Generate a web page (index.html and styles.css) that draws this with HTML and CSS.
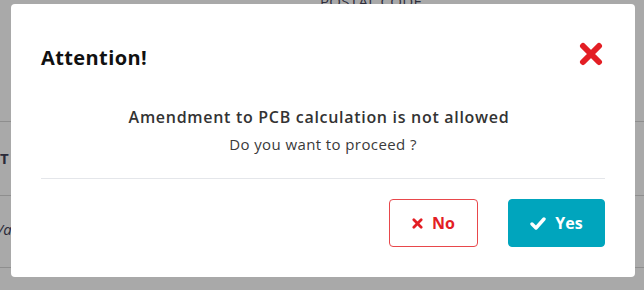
FILE: index.html
```html
<!DOCTYPE html>
<html>
<head>
<meta charset="utf-8">
<link rel="stylesheet" href="styles.css">
</head>
<body>
<div class="page">
  <div class="table">
    <div class="row head"><span class="postal">POSTAL CODE</span></div>
    <div class="row r2"><span class="cell-t">T</span></div>
    <div class="row r3"><span class="cell-a">/a</span></div>
  </div>
</div>
<div class="overlay">
  <div class="modal">
    <div class="modal-head">
      <h2 class="title">Attention!</h2>
      <svg class="close" width="24" height="24" viewBox="0 0 24 24"><path d="M4 4 L20 20 M20 4 L4 20" stroke="#e31e24" stroke-width="6" stroke-linecap="round"/></svg>
    </div>
    <div class="modal-body">
      <p class="msg">Amendment to PCB calculation is not allowed</p>
      <p class="sub">Do you want to proceed ?</p>
    </div>
    <div class="modal-foot">
      <button class="btn btn-no"><svg width="11" height="11" viewBox="0 0 12 12"><path d="M2 2 L10 10 M10 2 L2 10" stroke="#e31e24" stroke-width="3" stroke-linecap="round"/></svg>No</button>
      <button class="btn btn-yes"><svg width="16" height="13" viewBox="0 0 16 13"><path d="M2 7 L6 11 L14 2" fill="none" stroke="#fff" stroke-width="3.4" stroke-linecap="round" stroke-linejoin="round"/></svg>Yes</button>
    </div>
  </div>
</div>
</body>
</html>
```
FILE: styles.css
```css
html, body {
  margin: 0;
  padding: 0;
}
body {
  width: 644px;
  height: 290px;
  overflow: hidden;
  background: #a9a9a9;
  font-family: "Open Sans", "Liberation Sans", sans-serif;
  position: relative;
}
.page {
  height: 290px;
}
.table {
  display: flex;
  flex-direction: column;
  color: #2b2b3a;
}
.row {
  border-bottom: 1px solid #8e8e8e;
  display: flex;
  align-items: center;
}
.head {
  height: 121px;
  align-items: flex-start;
  padding-left: 320px;
}
.postal {
  margin-top: -9px;
  font-size: 15px;
  color: #2e2e3c;
  letter-spacing: 0.3px;
}
.r2 {
  height: 73px;
  font-weight: bold;
  font-size: 15px;
}
.r3 {
  height: 71px;
  font-style: italic;
  font-size: 15px;
}
.cell-t { margin-top: -2px; }
.cell-a { margin-left: -2px; margin-top: -6px; }
.overlay {
  position: absolute;
  left: 11px;
  top: 4px;
}
.modal {
  width: 624px;
  height: 273px;
  background: #fff;
  border-radius: 4px;
  box-sizing: border-box;
  padding: 0 30px;
  display: flex;
  flex-direction: column;
}
.modal-head {
  display: flex;
  justify-content: space-between;
  align-items: center;
  box-sizing: border-box;
  height: 82px;
  padding-top: 31px;
}
.title {
  margin: 0;
  font-size: 20px;
  font-weight: 700;
  color: #111;
  margin-top: -6px;
  letter-spacing: 0.4px;
}
.close {
  margin-right: 2px;
  margin-top: -14px;
}
.modal-body {
  text-align: center;
  color: #333;
  border-bottom: 1px solid #e4e6ea;
  padding-bottom: 24px;
}
.msg {
  margin: 0 8px 0 0;
  font-size: 16px;
  font-weight: 600;
  line-height: 20px;
  margin-top: 21px;
  letter-spacing: 0.7px;
}
.sub {
  margin: 7px 0 0;
  font-size: 15px;
  line-height: 20px;
  color: #3a3a3a;
  letter-spacing: 0.4px;
}
.modal-foot {
  display: flex;
  justify-content: flex-end;
  gap: 30px;
  padding-top: 20px;
}
.btn {
  height: 48px;
  border-radius: 4px;
  font-family: inherit;
  font-size: 16px;
  font-weight: 700;
  display: flex;
  align-items: center;
  justify-content: center;
  gap: 9px;
  box-sizing: border-box;
  cursor: pointer;
}
.btn-no {
  width: 89px;
  background: #fff;
  border: 1.5px solid #e8474b;
  color: #e31e24;
}
.btn-yes {
  width: 97px;
  background: #00a5bd;
  border: 1px solid #00a5bd;
  color: #fff;
}
```
